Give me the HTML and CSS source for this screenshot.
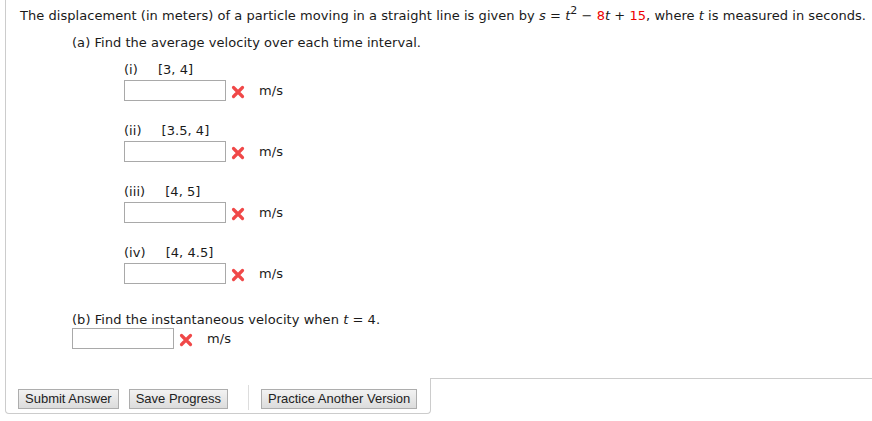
FILE: index.html
```html
<!DOCTYPE html>
<html>
<head>
<meta charset="utf-8">
<link rel="stylesheet" href="styles.css">
</head>
<body>
<div class="page">
  <div class="question">
    <p class="intro">The displacement (in meters) of a particle moving in a straight line is given by <i>s</i> = <i>t</i><sup>2</sup> &minus; <span class="red">8</span><i>t</i> + <span class="red">15</span>, where <i>t</i> is measured in seconds.</p>
    <div class="part">
      <p class="part-title">(a) Find the average velocity over each time interval.</p>
      <div class="items">
        <div class="item">
          <div class="label"><span class="num">(i)</span><span>[3, 4]</span></div>
          <div class="answer"><span class="box"></span><svg class="wrong" viewBox="0 0 14 14"><path d="M2.5 2.5 L11.5 11.5 M11.5 2.5 L2.5 11.5"/></svg><span class="unit">m/s</span></div>
        </div>
        <div class="item">
          <div class="label"><span class="num">(ii)</span><span>[3.5, 4]</span></div>
          <div class="answer"><span class="box"></span><svg class="wrong" viewBox="0 0 14 14"><path d="M2.5 2.5 L11.5 11.5 M11.5 2.5 L2.5 11.5"/></svg><span class="unit">m/s</span></div>
        </div>
        <div class="item">
          <div class="label"><span class="num">(iii)</span><span>[4, 5]</span></div>
          <div class="answer"><span class="box"></span><svg class="wrong" viewBox="0 0 14 14"><path d="M2.5 2.5 L11.5 11.5 M11.5 2.5 L2.5 11.5"/></svg><span class="unit">m/s</span></div>
        </div>
        <div class="item">
          <div class="label"><span class="num">(iv)</span><span>[4, 4.5]</span></div>
          <div class="answer"><span class="box"></span><svg class="wrong" viewBox="0 0 14 14"><path d="M2.5 2.5 L11.5 11.5 M11.5 2.5 L2.5 11.5"/></svg><span class="unit">m/s</span></div>
        </div>
      </div>
      <p class="part-title part-b">(b) Find the instantaneous velocity when <i>t</i> = 4.</p>
      <div class="answer"><span class="box"></span><svg class="wrong" viewBox="0 0 14 14"><path d="M2.5 2.5 L11.5 11.5 M11.5 2.5 L2.5 11.5"/></svg><span class="unit">m/s</span></div>
    </div>
  </div>
  <div class="footer">
    <div class="buttons">
      <button class="btn">Submit Answer</button>
      <button class="btn">Save Progress</button>
      <span class="sep"></span>
      <button class="btn">Practice Another Version</button>
    </div>
    <div class="filler"></div>
  </div>
</div>
</body>
</html>
```

FILE: styles.css
```css
html, body {
  margin: 0;
  padding: 0;
  background: #fff;
}
body {
  font-family: "DejaVu Sans", Verdana, sans-serif;
  font-size: 13px;
  color: #1a1a1a;
  letter-spacing: 0.045px;
}
.page {
  margin-left: 5px;
}
.question {
  border-left: 1px solid #ccc;
  padding: 8px 0 29px 14px;
}
p {
  margin: 0;
}
.intro {
  line-height: 16px;
}
.intro sup {
  font-size: 11px;
  line-height: 0;
  vertical-align: 6px;
}
.red {
  color: #e00;
}
.part {
  margin-left: 52px;
  margin-top: 11px;
}
.part-title {
  line-height: 16px;
}
.items {
  margin-left: 52px;
  margin-top: 11px;
}
.item {
  margin-bottom: 22px;
}
.label {
  display: flex;
  line-height: 16px;
  height: 16px;
  margin-bottom: 2px;
}
.num {
  margin-right: 20px;
}
.answer {
  display: flex;
  align-items: center;
  height: 21px;
}
.box {
  display: block;
  width: 100px;
  height: 19px;
  border: 1px solid #a9a9a9;
  background: #fff;
}
.wrong {
  width: 14px;
  height: 14px;
  margin-left: 5px;
  margin-top: 2px;
}
.wrong path {
  stroke: #f04848;
  stroke-width: 3.2;
  stroke-linecap: round;
  fill: none;
}
.unit {
  margin-left: 14px;
}
.part-b {
  padding-top: 6px;
}
.footer {
  display: flex;
  align-items: flex-start;
}
.buttons {
  display: flex;
  align-items: flex-start;
  flex-shrink: 0;
  width: 412px;
  height: 35px;
  padding: 0 0 0 12px;
  border-left: 1px solid #ccc;
  border-right: 1px solid #ccc;
  border-bottom: 1px solid #ccc;
  border-radius: 0 0 4px 4px;
  letter-spacing: 0;
}
.btn {
  flex-shrink: 0;
  white-space: nowrap;
  font-family: "Liberation Sans", Arial, sans-serif;
  font-size: 13px;
  color: #222;
  height: 20px;
  padding: 0 6px;
  margin: 11px 10px 0 0;
  background: linear-gradient(#f2f2f2, #dcdcdc);
  border: 1px solid #adadad;
  border-radius: 0;
  line-height: 18px;
}
.sep {
  display: block;
  flex-shrink: 0;
  width: 1px;
  height: 25px;
  background: #ddd;
  margin: 7px 12px 0 10px;
}
.filler {
  flex: 1;
  border-top: 1px solid #ccc;
}
```
